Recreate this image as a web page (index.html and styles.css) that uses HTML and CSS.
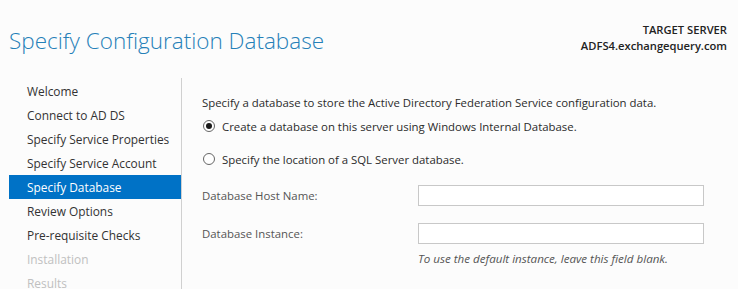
FILE: index.html
```html
<!DOCTYPE html>
<html>
<head>
<meta charset="utf-8">
<link rel="stylesheet" href="styles.css">
</head>
<body>
<div class="page">
  <header class="header">
    <h1 class="title">Specify Configuration Database</h1>
    <div class="target">
      <div class="target-label">TARGET SERVER</div>
      <div class="target-name">ADFS4.exchangequery.com</div>
    </div>
  </header>
  <div class="main">
    <nav class="nav">
      <div class="nav-item">Welcome</div>
      <div class="nav-item">Connect to AD DS</div>
      <div class="nav-item">Specify Service Properties</div>
      <div class="nav-item">Specify Service Account</div>
      <div class="nav-item active">Specify Database</div>
      <div class="nav-item">Review Options</div>
      <div class="nav-item">Pre-requisite Checks</div>
      <div class="nav-item disabled">Installation</div>
      <div class="nav-item disabled">Results</div>
    </nav>
    <section class="content">
      <p class="intro">Specify a database to store the Active Directory Federation Service configuration data.</p>
      <div class="radio-row first">
        <span class="radio checked"></span>
        <span>Create a database on this server using Windows Internal Database.</span>
      </div>
      <div class="radio-row second">
        <span class="radio"></span>
        <span>Specify the location of a SQL Server database.</span>
      </div>
      <div class="form">
        <div class="field-row host">
          <label class="field-label">Database Host Name:</label>
          <div class="input"></div>
        </div>
        <div class="field-row instance">
          <label class="field-label">Database Instance:</label>
          <div class="input"></div>
        </div>
        <div class="hint">To use the default instance, leave this field blank.</div>
      </div>
    </section>
  </div>
</div>
</body>
</html>
```
FILE: styles.css
```css
html, body {
  margin: 0;
  padding: 0;
}
body {
  background: #fcfcfc;
  font-family: "Open Sans", "Noto Sans", sans-serif;
  font-size: 11.4px;
  color: #2b2b2b;
  width: 738px;
  height: 289px;
  overflow: hidden;
}
.page {
  display: flex;
  flex-direction: column;
  height: 289px;
}
.header {
  flex-shrink: 0;
  height: 78px;
  display: flex;
  justify-content: space-between;
  align-items: flex-start;
  padding: 0 11px 0 9px;
  box-sizing: border-box;
}
.title {
  margin: 26px 0 0 0;
  font-size: 22.5px;
  font-weight: 300;
  color: #2580b8;
  line-height: 30px;
}
.target {
  margin-top: 22px;
  text-align: right;
  font-weight: 600;
  font-size: 11.2px;
  line-height: 16px;
  color: #222;
}
.main {
  display: flex;
  flex: 1;
  min-height: 0;
}
.nav {
  width: 172px;
  padding-left: 9px;
  padding-top: 1px;
  border-right: 1px solid #d0d0d0;
  flex-shrink: 0;
}
.nav-item {
  height: 24px;
  line-height: 24px;
  padding-left: 18px;
  white-space: nowrap;
  color: #333;
  font-size: 11.9px;
}
.nav-item.active {
  background: #0072c6;
  color: #fff;
}
.nav-item.disabled {
  color: #c0c0c0;
}
.content {
  flex: 1;
  padding-left: 20px;
}
.intro {
  margin: 16px 0 0 0;
  line-height: 18px;
}
.radio-row {
  display: flex;
  align-items: center;
  height: 18px;
  margin-left: 1px;
}
.radio-row.first {
  margin-top: 5px;
}
.radio-row.second {
  margin-top: 15px;
}
.radio {
  width: 10px;
  height: 10px;
  border: 1px solid #666;
  border-radius: 50%;
  margin-right: 7px;
  box-sizing: content-box;
  position: relative;
  background: #fff;
}
.radio.checked::after {
  content: "";
  position: absolute;
  left: 2px;
  top: 2px;
  width: 6px;
  height: 6px;
  border-radius: 50%;
  background: #1a1a1a;
}
.form {
  margin-top: 16px;
}
.field-row {
  display: flex;
  align-items: center;
  height: 22px;
}
.field-row.instance {
  margin-top: 16px;
}
.field-label {
  width: 216px;
  color: #555;
}
.input {
  width: 284px;
  height: 19px;
  border: 1px solid #c8c8c8;
  background: #fff;
}
.hint {
  margin-left: 216px;
  margin-top: 7px;
  font-style: italic;
  font-size: 11.6px;
  color: #555;
  line-height: 16px;
}
```
